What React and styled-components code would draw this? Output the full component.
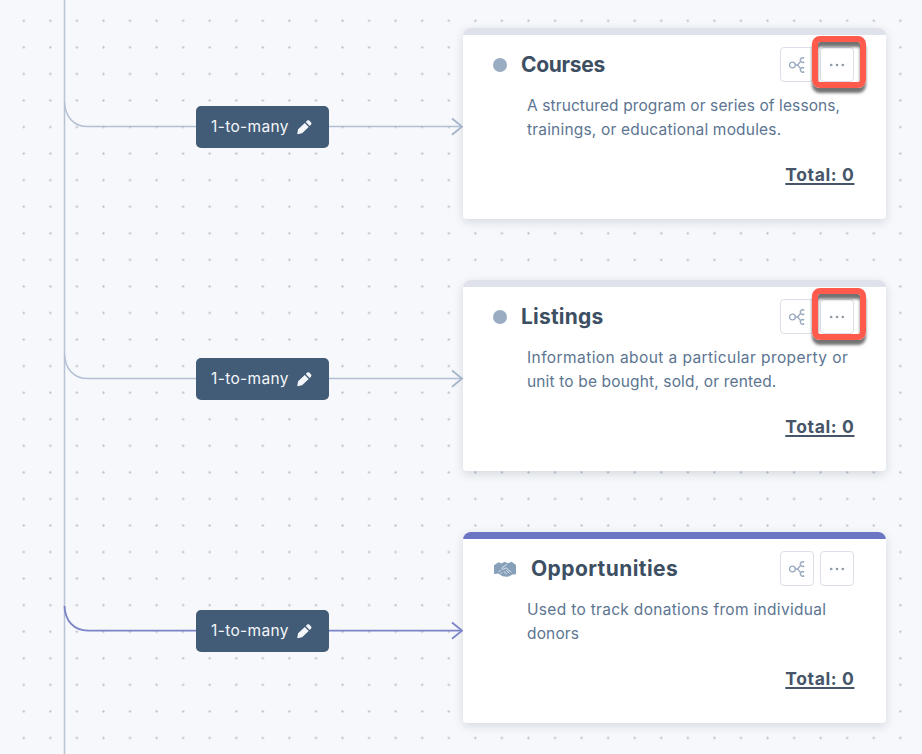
import React from "react";
import styled, { createGlobalStyle } from "styled-components";

const Global = createGlobalStyle`
  * { box-sizing: border-box; }
  body { margin: 0; background: #f6f8fb; }
`;

const Canvas = styled.main`
  width: 922px;
  height: 754px;
  overflow: hidden;
  background-color: #f6f8fb;
  background-image: radial-gradient(circle, #b9bec8 0.7px, rgba(185, 190, 200, 0) 1.5px);
  background-size: 26.57px 26.57px;
  background-position: 10.5px 7.5px;
  font-family: Inter, "Liberation Sans", sans-serif;
`;

const Row = styled.section`
  display: grid;
  grid-template-columns: 463px 423px;
  height: 252px;
`;

const Link = styled.div`
  position: relative;
  display: flex;
  align-items: flex-start;
  padding: 106px 0 0 196px;
`;

const Wire = styled.svg`
  position: absolute;
  inset: 0;
`;

const Pill = styled.button`
  position: relative;
  display: flex;
  align-items: center;
  justify-content: space-between;
  width: 133px;
  height: 42px;
  padding: 0 17px 1px 15px;
  border: 0;
  border-radius: 5px;
  background: #425b76;
  color: #f4f7fa;
  font: 400 15.5px Inter, sans-serif;
  letter-spacing: 0.35px;
  white-space: nowrap;
`;

const Card = styled.article`
  display: flex;
  flex-direction: column;
  height: 191px;
  margin-top: 28px;
  border-radius: 8px 8px 4px 4px;
  background: linear-gradient(${(p) => p.$accent} 7px, #fff 7px);
  box-shadow: 0 3px 10px rgba(45, 62, 80, 0.17);
`;

const Header = styled.header`
  display: flex;
  align-items: center;
  height: 35px;
  margin: 19px 32px 0 30px;
`;

const Dot = styled.span`
  width: 14px;
  height: 14px;
  margin-right: 14px;
  border-radius: 50%;
  background: #99acc2;
`;

const Shake = styled.span`
  display: flex;
  width: 23px;
  margin: 0 14px 0 1px;
`;

const Title = styled.h2`
  flex: 1;
  margin: 0;
  color: #3d4f62;
  font-size: 21px;
  line-height: 35px;
  font-weight: 700;
  letter-spacing: ${(p) => p.$track}px;
`;

const IconButton = styled.button`
  display: flex;
  align-items: center;
  justify-content: center;
  width: 34px;
  height: 35px;
  margin-left: 6px;
  padding: 0;
  border: 1px solid #dcdfe8;
  border-radius: 4px;
  background: #fff;
`;

const More = styled.div`
  position: relative;
`;

const Highlight = styled.span`
  position: absolute;
  left: -2px;
  top: -11px;
  width: 54px;
  height: 52px;
  border: 6px solid #ff5a4c;
  border-radius: 8px;
  box-shadow: 0 5px 3px rgba(0, 0, 0, 0.55), inset 0 5px 3px rgba(0, 0, 0, 0.55);
`;

const Description = styled.p`
  height: 48px;
  margin: 12px 0 0 64px;
  color: #5c7591;
  font-size: 15.5px;
  line-height: 24px;
  white-space: nowrap;
`;

const Line = styled.span`
  display: block;
  letter-spacing: ${(p) => p.$track}px;
`;

const Total = styled.a`
  align-self: flex-end;
  margin: 21px 31.5px 0 0;
  color: #465668;
  font-size: 17.5px;
  line-height: 24px;
  font-weight: 700;
  letter-spacing: 0.62px;
  text-decoration: underline;
  text-decoration-thickness: 2px;
  text-underline-offset: 2px;
`;

const Pencil = () => (
  <svg width="16" height="16" viewBox="0 0 16 16" fill="#f4f7fa">
    <path d="M1.2 15.2l.9-4.9 6.7-6.4 3.9 4-6.6 6.3zM9.8 3l1.5-1.4c.6-.5 1.3-.5 1.9 0l1.9 2c.5.6.5 1.3 0 1.9L13.7 7z" />
  </svg>
);

const Associate = () => (
  <svg width="18" height="18" viewBox="0 0 18 18" fill="none" stroke="#9babc0" strokeWidth="1.4">
    <circle cx="4.4" cy="9" r="2.9" />
    <path d="M7.3 9h2.3M9.6 9l3-3.6M9.6 9l3 3.6" />
    <path d="M16.2 2.4a2.3 2.3 0 1 0 0 3.5M16.2 12.1a2.3 2.3 0 1 0 0 3.5" />
  </svg>
);

const Dots = () => (
  <svg width="16" height="4" viewBox="0 0 16 4" fill="#8e99a8">
    <circle cx="2.2" cy="2" r="1.3" />
    <circle cx="8" cy="2" r="1.3" />
    <circle cx="13.8" cy="2" r="1.3" />
  </svg>
);

const Handshake = () => (
  <svg width="22" height="16" viewBox="0 0 22 16">
    <path d="M0 4.2L4.6 1.2 7.6 2.4 10.4.8 14 2.2 17.6.8 22 4v9.2l-3.4.2-2 1.2-1.8.9-2.2.3-4-.6-4.4-2.6L0 13z" fill="#86a0b9" />
    <path d="M12.8 3.4L8.2 6.6c-.9.8.1 2 1.3 1.5l2.6-1.3 5.2 4.6M12.2 9.3l3 2.8M10 10.6l2.8 2.6M4.6 11l2.2-2.2M6.6 12.8l2-2" fill="none" stroke="#e6edf4" strokeWidth=".9" />
  </svg>
);

const Edge = ({ color, arrow, weight }) => (
  <Wire width="463" height="252" fill="none">
    <path d="M64.5 0V252" stroke="#b9c3d6" strokeWidth="1.5" />
    <path d="M64.5 102C65 117 74 126.6 88 126.6H461" stroke={color} strokeWidth={weight} />
    <path d="M452 118.5l10 8.1-10 8.1" stroke={arrow} strokeWidth="1.8" />
  </Wire>
);

const items = [
  {
    title: "Courses", track: -0.3,
    lines: [["A structured program or series of lessons,", 0.1], ["trainings, or educational modules.", 0.19]],
    highlighted: true,
  },
  {
    title: "Listings", track: 0.2,
    lines: [["Information about a particular property or", 0.42], ["unit to be bought, sold, or rented.", 0.15]],
    highlighted: true,
  },
  {
    title: "Opportunities", track: 0.42,
    lines: [["Used to track donations from individual", 0.31], ["donors", 0.15]],
    active: true,
  },
];

export default function App() {
  return (
    <>
      <Global />
      <Canvas>
        {items.map((item) => (
          <Row key={item.title}>
            <Link>
              <Edge
                color={item.active ? "#7c84c8" : "#b3bfd3"}
                arrow={item.active ? "#7c84c8" : "#a5b4cb"}
                weight={item.active ? 1.9 : 1.5}
              />
              <Pill>1-to-many<Pencil /></Pill>
            </Link>
            <Card $accent={item.active ? "#6c75c4" : "#dfe1eb"}>
              <Header>
                {item.active ? <Shake><Handshake /></Shake> : <Dot />}
                <Title $track={item.track}>{item.title}</Title>
                <IconButton aria-label="Associations"><Associate /></IconButton>
                <More>
                  <IconButton aria-label="More"><Dots /></IconButton>
                  {item.highlighted && <Highlight />}
                </More>
              </Header>
              <Description>
                {item.lines.map(([text, track]) => <Line key={text} $track={track}>{text}</Line>)}
              </Description>
              <Total>Total: 0</Total>
            </Card>
          </Row>
        ))}
      </Canvas>
    </>
  );
}
